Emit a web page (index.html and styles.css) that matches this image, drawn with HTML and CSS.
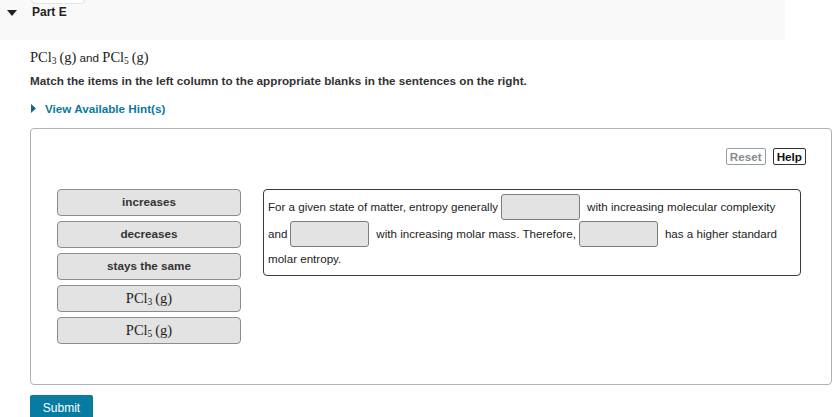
FILE: index.html
```html
<!DOCTYPE html>
<html>
<head>
<meta charset="utf-8">
<link rel="stylesheet" href="styles.css">
</head>
<body>
<div class="page">
  <div class="header">
    <div class="tab"></div>
    <svg class="caret" width="10" height="6" viewBox="0 0 10 6"><polygon points="0,0 10,0 5,6" fill="#222"/></svg>
    <span class="part-title">Part E</span>
  </div>
  <div class="content">
    <div class="intro"><span class="m">PCl<sub>3</sub>&#8201;(g)</span> and <span class="m">PCl<sub>5</sub>&#8201;(g)</span></div>
    <div class="instr">Match the items in the left column to the appropriate blanks in the sentences on the right.</div>
    <div class="hint"><svg class="hint-caret" width="5" height="9" viewBox="0 0 5 9"><polygon points="0,0 5,4.5 0,9" fill="#1d6583"/></svg><span>View Available Hint(s)</span></div>
    <div class="panel">
      <div class="toolbar">
        <button class="tbtn reset">Reset</button>
        <button class="tbtn help">Help</button>
      </div>
      <div class="work">
        <div class="items">
          <div class="item">increases</div>
          <div class="item">decreases</div>
          <div class="item">stays the same</div>
          <div class="item m-item"><span class="m">PCl<sub>3</sub>&#8201;(g)</span></div>
          <div class="item m-item"><span class="m">PCl<sub>5</sub>&#8201;(g)</span></div>
        </div>
        <div class="sentence">
          <p class="stext">For a given state of matter, entropy generally<span class="blank"></span>with increasing molecular complexity and<span class="blank"></span>with increasing molar mass. Therefore,<span class="blank"></span>has a higher standard molar entropy.</p>
        </div>
      </div>
    </div>
    <button class="submit">Submit</button>
  </div>
</div>
</body>
</html>
```

FILE: styles.css
```css
html, body {
  margin: 0;
  padding: 0;
  background: #fff;
}
body {
  font-family: "Liberation Sans", Arial, sans-serif;
  color: #333;
  overflow: hidden;
}
.page {
  width: 837px;
  height: 417px;
  position: relative;
}
.header {
  width: 785px;
  height: 40px;
  background: #f9f9f9;
  display: flex;
  align-items: flex-start;
  padding-left: 7px;
  box-sizing: border-box;
  position: relative;
}
.tab {
  position: absolute;
  left: 31px;
  top: -2px;
  width: 52px;
  height: 4px;
  background: #fff;
  border: 1px solid #e4e4e4;
  border-radius: 0 0 4px 4px;
}
.caret {
  margin-top: 10px;
}
.part-title {
  margin-left: 15px;
  margin-top: 5px;
  font-weight: bold;
  font-size: 12px;
  line-height: 14px;
  color: #222;
}
.content {
  padding-left: 30px;
}
.m {
  font-family: "Liberation Serif", "Times New Roman", serif;
  font-size: 14.5px;
  font-weight: normal;
  color: #222;
}
.m sub {
  font-size: 9.5px;
  vertical-align: -2px;
  line-height: 0;
}
.intro {
  margin-top: 9px;
  height: 16px;
  line-height: 16px;
  font-size: 11.7px;
  color: #222;
}
.instr {
  margin-top: 9px;
  font-size: 11.7px;
  line-height: 14px;
  font-weight: bold;
  color: #333;
}
.hint {
  margin-top: 13px;
  display: flex;
  align-items: center;
  height: 14px;
  font-size: 11.7px;
  font-weight: bold;
  color: #0b7aa0;
}
.hint-caret {
  margin-left: 1px;
  margin-right: 9px;
}
.panel {
  margin-top: 13px;
  width: 802px;
  height: 257px;
  box-sizing: border-box;
  border: 1px solid #b1b1b1;
  border-radius: 4px;
  padding: 19px 25px 0 26px;
}
.toolbar {
  display: flex;
  justify-content: flex-end;
  gap: 7px;
  height: 17px;
}
.tbtn {
  font-family: "Liberation Sans", Arial, sans-serif;
  font-size: 11.7px;
  font-weight: bold;
  height: 17px;
  padding: 0 3px;
  margin: 0;
  background: #fff;
  border-radius: 2px;
  line-height: 15px;
}
.reset {
  color: #8b8b8b;
  border: 1px solid #8ea0a4;
}
.help {
  color: #111;
  border: 1px solid #333;
}
.work {
  margin-top: 24px;
  display: flex;
  align-items: flex-start;
  gap: 22px;
}
.items {
  width: 184px;
  display: flex;
  flex-direction: column;
  gap: 5px;
}
.item {
  height: 27px;
  box-sizing: border-box;
  background: #e3e3e3;
  border: 1px solid #8c8c8c;
  border-radius: 4px;
  display: flex;
  justify-content: center;
  align-items: flex-start;
  padding-top: 5px;
  font-size: 11.7px;
  font-weight: bold;
  line-height: 13px;
  color: #333;
}
.m-item {
  padding-top: 4px;
  line-height: 16px;
}
.sentence {
  width: 538px;
  height: 87px;
  box-sizing: border-box;
  border: 1px solid #3a3a3a;
  border-radius: 4px;
  padding: 4px 4px 0 4px;
}
.stext {
  margin: 0;
  font-size: 11.6px;
  line-height: 22px;
  color: #222;
}
.blank {
  display: inline-block;
  width: 79px;
  height: 26px;
  box-sizing: border-box;
  background: #e3e3e3;
  border: 1px solid #7c7c7c;
  border-radius: 3px;
  vertical-align: middle;
  margin: 0 7px 1px 3px;
}
.submit {
  margin-top: 10px;
  width: 63px;
  height: 26px;
  background: #077ca0;
  color: #fff;
  border: none;
  border-radius: 2px;
  font-family: "Liberation Sans", Arial, sans-serif;
  font-size: 12px;
  padding: 0;
  line-height: 26px;
}
```
